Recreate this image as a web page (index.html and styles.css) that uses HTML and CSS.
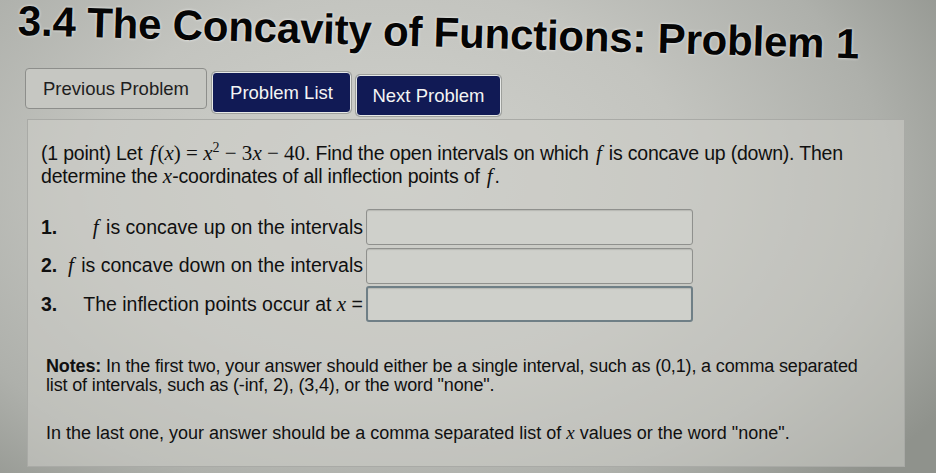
FILE: index.html
```html
<!DOCTYPE html>
<html>
<head>
<meta charset="utf-8">
<link rel="stylesheet" href="styles.css">
</head>
<body>
<div class="page">
  <h1 class="title">3.4 The Concavity of Functions: Problem 1</h1>
  <div class="nav">
    <span class="btn btn-light">Previous Problem</span>
    <span class="btn btn-dark">Problem List</span>
    <span class="btn btn-dark btn-next">Next Problem</span>
  </div>
  <div class="panel">
    <p class="problem">(1 point) Let <span class="m"><span class="mf">f</span>(<i>x</i>) = <i>x</i><sup>2</sup> − 3<i>x</i> − 40</span>. Find the open intervals on which <span class="mf">f</span> is concave up (down). Then determine the <span class="m"><i>x</i></span>-coordinates of all inflection points of <span class="mf">f</span>.</p>
    <div class="answers">
      <span class="num">1.</span><span class="label"><span class="mf">f</span> is concave up on the intervals</span><span class="box"></span>
      <span class="num">2.</span><span class="label"><span class="mf">f</span> is concave down on the intervals</span><span class="box"></span>
      <span class="num">3.</span><span class="label">The inflection points occur at <span class="m"><i>x</i></span> =</span><span class="box box-focus"></span>
    </div>
    <p class="notes first"><b>Notes:</b> In the first two, your answer should either be a single interval, such as (0,1), a comma separated list of intervals, such as (-inf, 2), (3,4), or the word "none".</p>
    <p class="notes last">In the last one, your answer should be a comma separated list of <span class="m"><i>x</i></span> values or the word "none".</p>
  </div>
</div>
</body>
</html>
```
FILE: styles.css
```css
html, body {
  margin: 0;
  padding: 0;
}
body {
  width: 936px;
  height: 473px;
  overflow: hidden;
  font-family: "Liberation Sans", Arial, sans-serif;
  color: #141414;
  background: radial-gradient(ellipse 70% 90% at 42% 38%, #d0d1cc 0%, #c3c4bf 45%, #aeb0ab 75%, #8f928c 100%);
}
.page {
  padding: 0 0 0 18px;
}
.title {
  margin: -2px 0 0 0;
  font-size: 42px;
  line-height: 46px;
  font-weight: bold;
  color: #050505;
  letter-spacing: -0.2px;
  text-shadow: 0 0 3px rgba(255,255,255,0.85);
  transform: rotate(1.6deg);
  transform-origin: 0 50%;
}
.nav {
  display: flex;
  gap: 5px;
  margin-top: 24px;
  margin-left: 7px;
  align-items: flex-start;
}
.btn {
  display: inline-flex;
  align-items: center;
  justify-content: center;
  height: 41px;
  font-size: 18.5px;
  border-radius: 4px;
  box-sizing: border-box;
}
.btn-light {
  width: 182px;
  background: #c6c7c2;
  border: 1px solid #8d8e8b;
  color: #1e1e1e;
}
.btn-dark {
  width: 139px;
  margin-top: 4px;
  background: #111a55;
  color: #f4f4f4;
  border: 1px solid #e6e8e6;
  box-shadow: 0 0 0 1px #9ea09c;
}
.btn-next {
  width: 145px;
  margin-top: 7px;
}
.panel {
  margin: 3px 31px 0 9px;
  height: 348px;
  box-sizing: border-box;
  border: 1px solid #a9aaa6;
  background: rgba(205,206,201,0.55);
  padding: 22px 13px 0 13px;
}
.problem {
  margin: 0;
  font-size: 19.5px;
  line-height: 23px;
  letter-spacing: -0.2px;
  color: #101010;
}
.m {
  font-family: "Liberation Serif", "Times New Roman", serif;
  font-size: 21px;
  letter-spacing: 0;
}
.m sup {
  font-size: 14px;
  line-height: 0;
}
.mf {
  font-family: "Liberation Serif", "Times New Roman", serif;
  font-style: italic;
  font-size: 21px;
  margin: 0 2px;
}
.answers {
  display: grid;
  grid-template-columns: 22px 303px 327px;
  grid-auto-rows: 38.5px;
  align-items: center;
  margin-top: 20px;
  font-size: 19.5px;
  color: #101010;
}
.num {
  font-weight: bold;
}
.label {
  text-align: right;
  padding-right: 3px;
  white-space: nowrap;
}
.box {
  height: 36px;
  box-sizing: border-box;
  border: 1px solid #8f908d;
  border-radius: 3px;
  background: #cfd0cb;
  box-shadow: inset 0 1px 1px rgba(0,0,0,0.12);
}
.box-focus {
  border: 2px solid #6f7f86;
}
.notes {
  margin: 33px 0 0 5px;
  font-size: 18px;
  line-height: 19px;
  width: 820px;
  color: #101010;
}
.notes.first {
  letter-spacing: -0.15px;
}
.notes .m {
  font-size: 19px;
}
.notes.last {
  margin-top: 28px;
}
```
